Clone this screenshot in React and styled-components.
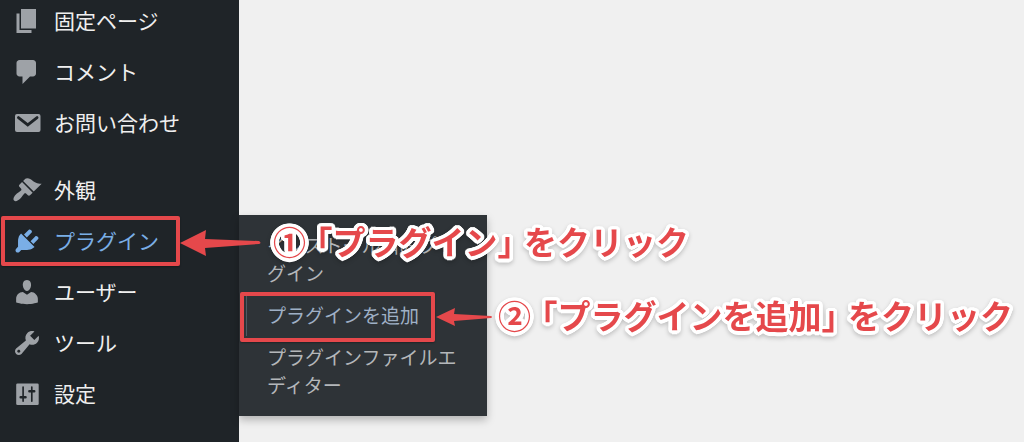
import React from "react";
import styled, { createGlobalStyle } from "styled-components";

const GlobalStyle = createGlobalStyle`
  * { box-sizing: border-box; }
  body {
    margin: 0;
    background: #f0f0f0;
    font-family: "Noto Sans CJK JP", "Noto Sans", sans-serif;
    overflow-x: hidden;
  }
`;

const Page = styled.div`
  display: grid;
  grid-template-columns: 239px 1fr;
  min-height: 100vh;
`;

const Sidebar = styled.nav`
  background: #1f2428;
`;

const Menu = styled.ul`
  display: flex;
  flex-direction: column;
  gap: 9px;
  margin: 0;
  padding: 0;
  list-style: none;
`;

const MenuItem = styled.li`
  position: relative;
  margin-top: ${(p) => (p.$separated ? "16px" : "0")};
`;

const MenuLink = styled.a`
  display: flex;
  align-items: center;
  gap: 12px;
  height: 42px;
  padding-left: 12px;
  color: ${(p) => (p.$current ? "#7aaee6" : "#efefef")};
  font-size: 21px;
  line-height: 30px;
  text-decoration: none;
  white-space: nowrap;
`;

const MenuLabel = styled.span`
  padding-bottom: 2px;
`;

const Icon = styled.svg`
  flex: none;
  width: 30px;
  height: 30px;
  fill: ${(p) => (p.$current ? "#7aaee6" : "#9ea2a7")};
`;

const Submenu = styled.ul`
  position: absolute;
  top: -5px;
  left: 239px;
  width: 248px;
  margin: 0;
  padding: 9px 0 10px;
  list-style: none;
  background: #2e3337;
  box-shadow: 0 4px 8px rgba(0, 0, 0, 0.25);
`;

const SubmenuItem = styled.li`
  position: relative;
`;

const SubmenuLink = styled.a`
  display: block;
  padding: 7px 28px;
  color: ${(p) => (p.$focused ? "#9fb0c6" : "#b4b7ba")};
  font-size: 19px;
  line-height: 28px;
  text-decoration: none;

  &::before {
    content: ${(p) => (p.$focused ? '""' : "none")};
    position: absolute;
    top: 0;
    bottom: 0;
    left: 7px;
    width: 1px;
    background: #4f5a63;
  }
`;

const Marker = styled.span`
  position: absolute;
  top: ${(p) => p.$top}px;
  left: 1px;
  width: ${(p) => p.$width}px;
  height: 50px;
  border: 4px solid #e5484b;
  border-radius: 2px;
  box-shadow: 0 1px 2px rgba(0, 0, 0, 0.3);
  z-index: 2;
  pointer-events: none;
`;

const Callout = styled.div`
  position: absolute;
  top: 50%;
  left: ${(p) => p.$left}px;
  transform: translateY(-50%);
  display: flex;
  align-items: center;
  gap: ${(p) => p.$gap}px;
  z-index: 3;
  pointer-events: none;
`;

const Arrow = styled.svg`
  flex: none;
  margin-top: 4px;
  fill: #e5484b;
`;

const outline = Array.from({ length: 24 }, (_, i) => {
  const angle = (i * Math.PI) / 12;
  return `${(3.5 * Math.cos(angle)).toFixed(2)}px ${(3.5 * Math.sin(angle)).toFixed(2)}px 0 #fff`;
}).join(", ");

const CalloutText = styled.p`
  display: flex;
  gap: 10px;
  margin: 0;
  color: #e5484b;
  font-size: 33px;
  font-weight: 700;
  line-height: 48px;
  white-space: nowrap;
  font-feature-settings: "halt";
  text-shadow: ${outline}, 0 0 2px #fff;
  filter: drop-shadow(0 2px 2px rgba(0, 0, 0, 0.2));
`;

const Content = styled.main`
  background: #f0f0f0;
`;

const icons = {
  page: <path d="M6 15V2h10v13zM5 16h8v2H3V5h2z" />,
  comment: (
    <path d="M5 2h9c1.1 0 2 .9 2 2v7c0 1.1-.9 2-2 2h-2l-5 5v-5H5c-1.1 0-2-.9-2-2V4c0-1.1.9-2 2-2z" />
  ),
  mail: (
    <>
      <rect x="2" y="4" width="17" height="12" rx="1.3" />
      <path d="M4.3 6.4l6.2 4.9 6.2-4.9" fill="none" stroke="#1f2428" strokeWidth="1.9" strokeLinecap="round" />
    </>
  ),
  brush: (
    <path d="M14.48 11.06L7.41 3.99l1.5-1.5c.5-.56 2.3-.47 3.51.32 1.21.8 1.43 1.28 2.91 2.1 1.18.64 2.45 1.26 4.45.85zm-.71.71L6.7 4.7 4.93 6.47c-.39.39-.39 1.02 0 1.41l1.06 1.06c.39.39.39 1.03 0 1.42-.6.6-1.43 1.11-2.21 1.69-.35.26-.7.53-1.01.84C1.43 14.23.4 16.08 1.4 17.07c.99 1 2.84-.03 4.18-1.36.31-.31.58-.66.85-1.02.57-.78 1.08-1.61 1.69-2.21.39-.39 1.02-.39 1.41 0l1.06 1.06c.39.39 1.02.39 1.41 0z" />
  ),
  plug: (
    <path d="M13.11 4.36L9.87 7.6 8 5.73l3.24-3.24c.35-.34 1.05-.2 1.56.32.52.51.66 1.21.31 1.55zm-8 1.77l.91-1.12 9.01 9.01-1.19.84c-.71.71-2.63 1.16-3.82 1.16H6.14L4.9 17.26c-.59.59-1.54.59-2.12 0-.59-.58-.59-1.53 0-2.12l1.24-1.24v-3.88c0-1.13.4-3.19 1.09-3.89zm7.26 3.97l3.24-3.24c.34-.35 1.04-.21 1.55.31.52.51.66 1.21.31 1.55l-3.24 3.25z" />
  ),
  user: (
    <path d="M10 9.25c-2.27 0-2.73-3.44-2.73-3.44C7 4.02 7.82 2 9.97 2c2.16 0 2.98 2.02 2.71 3.81 0 0-.41 3.44-2.68 3.44zm0 2.57L12.72 10c2.39 0 4.52 2.33 4.52 4.53v2.49s-3.65 1.13-7.24 1.13c-3.65 0-7.24-1.13-7.24-1.13v-2.49c0-2.25 1.94-4.48 4.47-4.48z" />
  ),
  wrench: (
    <path d="M16.68 9.77c-1.34 1.34-3.3 1.67-4.95.99l-5.41 6.52c-.99.99-2.59.99-3.58 0s-.99-2.59 0-3.57l6.52-5.42c-.68-1.65-.35-3.61.99-4.95 1.28-1.28 3.12-1.62 4.72-1.06l-2.89 2.89 2.82 2.82 2.86-2.87c.53 1.58.18 3.39-1.08 4.65zM3.81 16.21c.4.39 1.04.39 1.43 0 .4-.4.4-1.04 0-1.43-.39-.4-1.03-.4-1.43 0-.39.39-.39 1.03 0 1.43z" />
  ),
  sliders: (
    <>
      <rect x="2.8" y="3" width="15" height="14.4" rx="0.9" />
      <g fill="none" stroke="#1f2428" strokeLinecap="round">
        <path d="M7.4 5.4v9.4M13.2 5.4v9.4" strokeWidth="1.1" />
        <path d="M5.8 12.1h3.2M11.6 8.1h3.2" strokeWidth="1.7" />
      </g>
    </>
  ),
};

const submenuItems = [
  { label: "インストール済みプラグイン" },
  { label: "プラグインを追加", focused: true },
  { label: "プラグインファイルエディター" },
];

const menuItems = [
  { label: "固定ページ", icon: "page" },
  { label: "コメント", icon: "comment" },
  { label: "お問い合わせ", icon: "mail" },
  { label: "外観", icon: "brush", separated: true },
  { label: "プラグイン", icon: "plug", current: true },
  { label: "ユーザー", icon: "user" },
  { label: "ツール", icon: "wrench" },
  { label: "設定", icon: "sliders" },
];

function PluginSubmenu() {
  return (
    <Submenu>
      {submenuItems.map((item) => (
        <SubmenuItem key={item.label}>
          <SubmenuLink href="#" $focused={item.focused}>
            {item.label}
          </SubmenuLink>
          {item.focused && (
            <>
              <Marker $top={-2} $width={195} />
              <Callout $left={197} $gap={5}>
                <Arrow width="57" height="18" viewBox="0 0 57 18">
                  <path d="M0 9L19 0l-1 6 37 2q2 1 0 2l-37 3 1 5z" />
                </Arrow>
                <CalloutText>
                  <span>②</span>
                  <span>「プラグインを追加」</span>
                  <span>をクリック</span>
                </CalloutText>
              </Callout>
            </>
          )}
        </SubmenuItem>
      ))}
    </Submenu>
  );
}

export default function App() {
  return (
    <Page>
      <GlobalStyle />
      <Sidebar>
        <Menu>
          {menuItems.map((item) => (
            <MenuItem key={item.label} $separated={item.separated}>
              <MenuLink href="#" $current={item.current}>
                <Icon viewBox="0 0 20 20" $current={item.current} aria-hidden="true">
                  {icons[item.icon]}
                </Icon>
                <MenuLabel>{item.label}</MenuLabel>
              </MenuLink>
              {item.current && (
                <>
                  <PluginSubmenu />
                  <Marker $top={-4} $width={179} />
                  <Callout $left={180} $gap={12}>
                    <Arrow width="81" height="26" viewBox="0 0 81 26">
                      <path d="M0 13L26 0l-1 9 54 2q3 2 0 3l-54 4 1 8z" />
                    </Arrow>
                    <CalloutText>
                      <span>①</span>
                      <span>「プラグイン」</span>
                      <span>をクリック</span>
                    </CalloutText>
                  </Callout>
                </>
              )}
            </MenuItem>
          ))}
        </Menu>
      </Sidebar>
      <Content />
    </Page>
  );
}
